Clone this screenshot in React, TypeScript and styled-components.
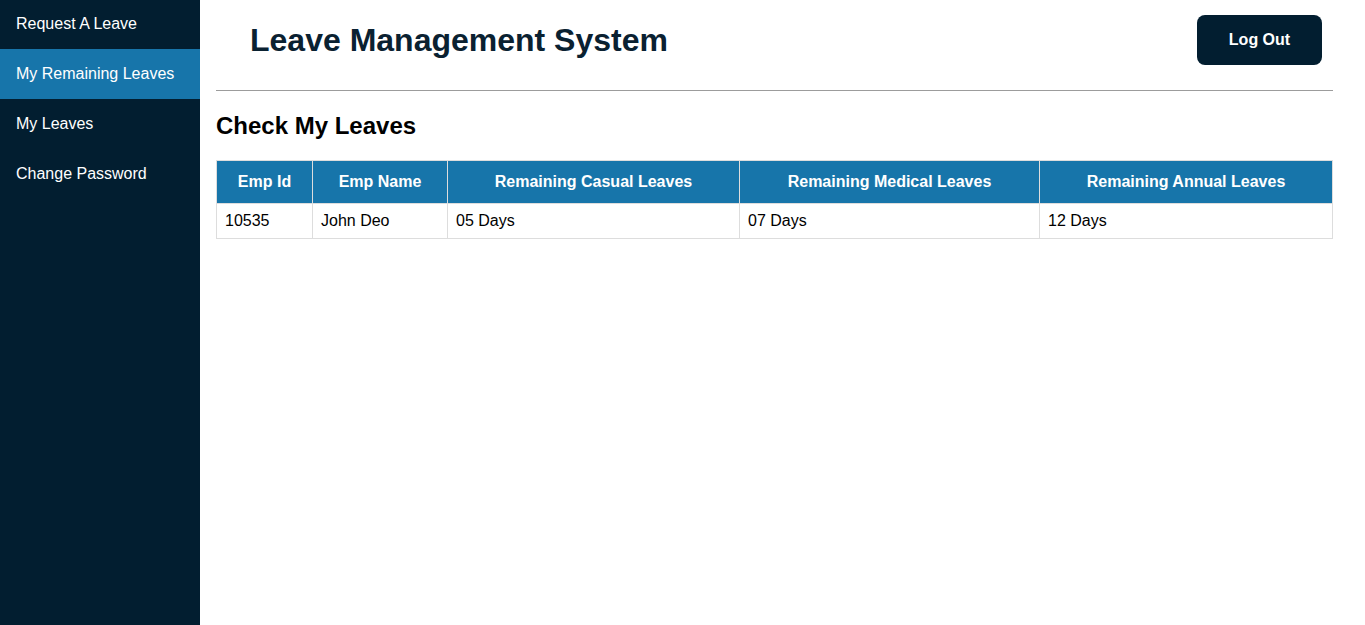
import * as React from 'react';
import styled, { createGlobalStyle } from 'styled-components';

const GlobalStyle = createGlobalStyle`
    html, body {
        margin: 0;
        padding: 0;
        background: #ffffff;
        font-family: "Liberation Sans", Arial, sans-serif;
    }
    * {
        box-sizing: border-box;
    }
`;

const Page = styled.div`
    display: flex;
    align-items: flex-start;
    min-height: 1000px;
`;

const Sidebar = styled.nav`
    position: sticky;
    top: 0;
    width: 200px;
    height: 100vh;
    flex-shrink: 0;
    background: #021e30;
    display: flex;
    flex-direction: column;
`;

const NavItem = styled.a<{ $active?: boolean }>`
    display: flex;
    align-items: center;
    height: 50px;
    padding: 0 16px 1px;
    color: #ffffff;
    font-size: 16px;
    text-decoration: none;
    background: ${p => (p.$active ? '#1775aa' : 'transparent')};
    cursor: pointer;
    &:first-child {
        margin-top: -1px;
    }
`;

const Main = styled.main`
    flex: 1;
    padding: 0 32px 0 16px;
`;

const Header = styled.header`
    display: flex;
    align-items: center;
    justify-content: space-between;
    height: 80px;
    padding: 0 11px 0 34px;
`;

const Title = styled.h1`
    margin: 0;
    font-size: 32px;
    font-weight: 700;
    color: #0a2131;
`;

const LogOutButton = styled.button`
    width: 125px;
    height: 50px;
    border: none;
    border-radius: 8px;
    background: #021e30;
    color: #ffffff;
    font-family: inherit;
    font-size: 16px;
    font-weight: 700;
    cursor: pointer;
`;

const Divider = styled.hr`
    margin: 10px 0 0;
    border: none;
    border-top: 1px solid #9c9c9c;
`;

const SectionTitle = styled.h2`
    margin: 21px 0 20px;
    font-size: 24px;
    line-height: 28px;
    font-weight: 700;
    color: #000000;
`;

const Table = styled.table`
    width: 100%;
    border-collapse: collapse;
    font-size: 16px;
`;

const HeadCell = styled.th<{ $w: number }>`
    width: ${p => p.$w}px;
    height: 43px;
    background: #1775aa;
    color: #ffffff;
    font-weight: 700;
    text-align: center;
    border: 1px solid #dddddd;
    padding: 0 8px;
`;

const Cell = styled.td`
    height: 35px;
    padding: 0 8px;
    color: #000000;
    border: 1px solid #dddddd;
`;

const columns = [
    { label: 'Emp Id', width: 96 },
    { label: 'Emp Name', width: 135 },
    { label: 'Remaining Casual Leaves', width: 292 },
    { label: 'Remaining Medical Leaves', width: 300 },
    { label: 'Remaining Annual Leaves', width: 293 }
];

const rows = [['10535', 'John Deo', '05 Days', '07 Days', '12 Days']];

const navItems = ['Request A Leave', 'My Remaining Leaves', 'My Leaves', 'Change Password'];

const App = () => {
    return (
        <>
            <GlobalStyle />
            <Page>
                <Sidebar>
                    {navItems.map(item => (
                        <NavItem key={item} $active={item === 'My Remaining Leaves'}>
                            {item}
                        </NavItem>
                    ))}
                </Sidebar>
                <Main>
                    <Header>
                        <Title>Leave Management System</Title>
                        <LogOutButton>Log Out</LogOutButton>
                    </Header>
                    <Divider />
                    <SectionTitle>Check My Leaves</SectionTitle>
                    <Table>
                        <thead>
                            <tr>
                                {columns.map(c => (
                                    <HeadCell key={c.label} $w={c.width}>{c.label}</HeadCell>
                                ))}
                            </tr>
                        </thead>
                        <tbody>
                            {rows.map(r => (
                                <tr key={r[0]}>
                                    {r.map((v, i) => (
                                        <Cell key={i}>{v}</Cell>
                                    ))}
                                </tr>
                            ))}
                        </tbody>
                    </Table>
                </Main>
            </Page>
        </>
    );
};

export default App;
